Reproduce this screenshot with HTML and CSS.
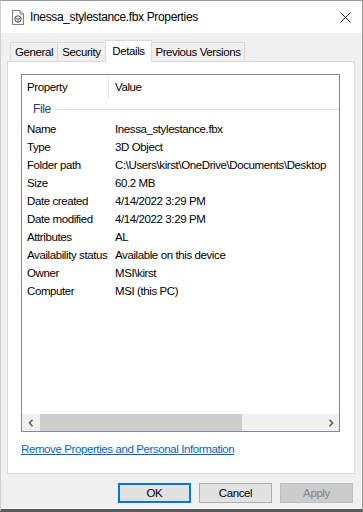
FILE: index.html
```html
<!DOCTYPE html>
<html>
<head>
<meta charset="utf-8">
<link rel="stylesheet" href="styles.css">
</head>
<body>
<div class="window">
  <div class="titlebar">
    <svg class="ticon" width="12" height="15" viewBox="0 0 12 15">
      <path d="M0.5 0.5 H8 L11.5 4 V14.5 H0.5 Z" fill="#fff" stroke="#7a7a7a"/>
      <path d="M8 0.5 V4 H11.5" fill="none" stroke="#7a7a7a"/>
      <circle cx="6" cy="9" r="3.2" fill="none" stroke="#444" stroke-width="1"/>
      <path d="M3.5 8.2 L6 9.2 L8.5 8.2 M6 9.2 V11.6" fill="none" stroke="#444" stroke-width="0.9"/>
    </svg>
    <span class="title">Inessa_stylestance.fbx Properties</span>
    <svg class="close" width="11" height="11" viewBox="0 0 11 11">
      <path d="M0.5 0.5 L10.5 10.5 M10.5 0.5 L0.5 10.5" stroke="#222" stroke-width="1"/>
    </svg>
  </div>
  <div class="content">
    <div class="tabs">
      <div class="tab t1">General</div>
      <div class="tab t2">Security</div>
      <div class="tab sel t3">Details</div>
      <div class="tab t4">Previous Versions</div>
    </div>
    <div class="panel">
      <div class="list">
        <div class="header">
          <div class="hcell c1">Property</div>
          <div class="hcell c2">Value</div>
        </div>
        <div class="group"><span class="gtext">File</span><span class="gline"></span></div>
        <div class="rows">
          <div class="row"><span class="c1">Name</span><span class="c2">Inessa_stylestance.fbx</span></div>
          <div class="row"><span class="c1">Type</span><span class="c2">3D Object</span></div>
          <div class="row"><span class="c1">Folder path</span><span class="c2">C:\Users\kirst\OneDrive\Documents\Desktop</span></div>
          <div class="row"><span class="c1">Size</span><span class="c2">60.2 MB</span></div>
          <div class="row"><span class="c1">Date created</span><span class="c2">4/14/2022 3:29 PM</span></div>
          <div class="row"><span class="c1">Date modified</span><span class="c2">4/14/2022 3:29 PM</span></div>
          <div class="row"><span class="c1">Attributes</span><span class="c2">AL</span></div>
          <div class="row"><span class="c1">Availability status</span><span class="c2">Available on this device</span></div>
          <div class="row"><span class="c1">Owner</span><span class="c2">MSI\kirst</span></div>
          <div class="row"><span class="c1">Computer</span><span class="c2">MSI (this PC)</span></div>
        </div>
        <div class="hscroll">
          <div class="arrow">
            <svg width="6" height="8" viewBox="0 0 6 8"><path d="M4.5 0.8 L1.5 4 L4.5 7.2" fill="none" stroke="#606060" stroke-width="1.6"/></svg>
          </div>
          <div class="track"><div class="thumb"></div></div>
          <div class="arrow">
            <svg width="6" height="8" viewBox="0 0 6 8"><path d="M1.5 0.8 L4.5 4 L1.5 7.2" fill="none" stroke="#606060" stroke-width="1.6"/></svg>
          </div>
        </div>
      </div>
      <a class="link" href="#">Remove Properties and Personal Information</a>
    </div>
    <div class="buttons">
      <div class="btn default">OK</div>
      <div class="btn">Cancel</div>
      <div class="btn disabled">Apply</div>
    </div>
  </div>
</div>
</body>
</html>
```
FILE: styles.css
```css
* { box-sizing: border-box; }
html, body { margin: 0; padding: 0; }
body {
  width: 363px;
  height: 512px;
  overflow: hidden;
  font-family: "Liberation Sans", Arial, sans-serif;
  font-size: 11.5px;
  letter-spacing: -0.4px;
  color: #000;
  background: #f0f0f0;
}
.window {
  width: 363px;
  height: 512px;
  display: flex;
  flex-direction: column;
  border-top: 1px solid #9a9a9a;
  border-left: 1px solid #d0d0d0;
  border-right: 1px solid #9a9a9a;
  border-bottom: 3px solid #5a5a5a;
  background: #f0f0f0;
}
.titlebar {
  height: 32px;
  background: #fff;
  display: flex;
  align-items: center;
  padding-left: 11px;
  padding-right: 11px;
  flex: none;
}
.ticon { margin-top: 1px; }
.title {
  margin-left: 6px;
  font-size: 12px;
  letter-spacing: -0.35px;
  color: #000;
  flex: 1;
}
.content {
  flex: 1;
  display: flex;
  flex-direction: column;
  padding: 0 7px 0 6px;
}
.tabs {
  display: flex;
  align-items: flex-end;
  height: 28px;
  padding-left: 3px;
  position: relative;
  z-index: 1;
}
.tab {
  height: 19px;
  line-height: 18px;
  border: 1px solid #d9d9d9;
  border-bottom: none;
  border-right: none;
  background: #f0f0f0;
  text-align: center;
  white-space: nowrap;
}
.t1 { width: 47px; }
.t2 { width: 48px; }
.t3 { width: 47px; }
.t4 { width: 93px; border-right: 1px solid #d9d9d9; }
.tab.sel {
  height: 22px;
  line-height: 20px;
  background: #fff;
  border: 1px solid #d9d9d9;
  border-bottom: none;
  margin-bottom: -1px;
}
.t3 + .t4 { border-left: none; }
.panel {
  height: 413px;
  background: #fff;
  border: 1px solid #d9d9d9;
  padding: 12px 13px 0 13px;
  display: flex;
  flex-direction: column;
}
.list {
  width: 319px;
  height: 358px;
  border: 1px solid #828790;
  display: flex;
  flex-direction: column;
  background: #fff;
}
.header {
  display: flex;
  height: 25px;
  align-items: center;
  flex: none;
}
.hcell { height: 23px; line-height: 23px; }
.c1 { width: 87px; padding-left: 5px; flex: none; }
.hcell.c1 { border-right: 1px solid #e5e5e5; }
.c2 { padding-left: 6px; white-space: nowrap; }
.group {
  height: 18px;
  display: flex;
  align-items: center;
  padding-left: 11px;
  flex: none;
}
.gtext { color: #1e3c8c; margin-right: 5px; font-size: 12px; }
.gline { flex: 1; height: 1px; background: #dae2ec; }
.rows { flex: 1; padding-top: 2px; }
.row {
  height: 18px;
  line-height: 18px;
  display: flex;
  white-space: nowrap;
}
.hscroll {
  height: 17px;
  display: flex;
  background: #f0f0f0;
  flex: none;
}
.arrow {
  width: 17px;
  display: flex;
  align-items: center;
  justify-content: center;
}
.track { flex: 1; padding: 0 1px; display: flex; }
.thumb { width: 202px; background: #cdcdcd; }
.link {
  margin-top: 11px;
  color: #0066cc;
  text-decoration: underline;
  align-self: flex-start;
}
.buttons {
  display: flex;
  justify-content: flex-end;
  gap: 8px;
  padding-top: 9px;
  padding-right: 2px;
}
.btn {
  width: 73px;
  height: 20px;
  line-height: 18px;
  text-align: center;
  background: #e1e1e1;
  border: 1px solid #adadad;
}
.btn.default { border: 2px solid #0078d7; line-height: 16px; }
.btn.disabled { background: #cccccc; border-color: #bfbfbf; color: #838383; }
```
